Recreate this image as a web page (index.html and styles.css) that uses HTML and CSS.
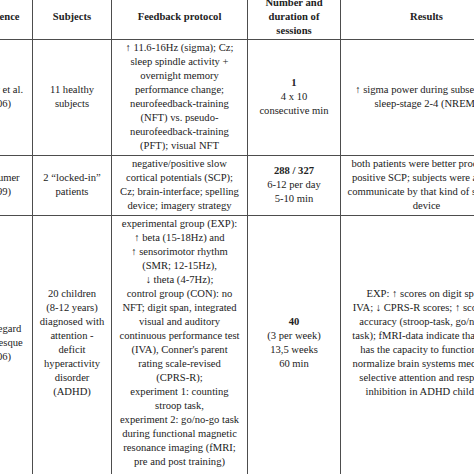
FILE: index.html
```html
<!DOCTYPE html>
<html>
<head>
<meta charset="utf-8">
<link rel="stylesheet" href="styles.css">
</head>
<body>
<div class="frame">
<table class="tbl">
<colgroup>
<col class="c-ref"><col class="c-sub"><col class="c-fb"><col class="c-num"><col class="c-res">
</colgroup>
<thead>
<tr>
<th>Reference</th>
<th>Subjects</th>
<th>Feedback protocol</th>
<th>Number and<br>duration of<br>sessions</th>
<th>Results</th>
</tr>
</thead>
<tbody>
<tr class="r1">
<td>Berner et al.<br>(2006)</td>
<td>11 healthy<br>subjects</td>
<td>↑ 11.6-16Hz (sigma); Cz;<br>sleep spindle activity +<br>overnight memory<br>performance change;<br>neurofeedback-training<br>(NFT) vs. pseudo-<br>neurofeedback-training<br>(PFT); visual NFT</td>
<td><b>1</b><br>4 x 10<br>consecutive min</td>
<td>↑ sigma power during subsequent<br>sleep-stage 2-4 (NREM)</td>
</tr>
<tr class="r2">
<td>Birbaumer<br>(1999)</td>
<td>2 “locked-in”<br>patients</td>
<td>negative/positive slow<br>cortical potentials (SCP);<br>Cz; brain-interface; spelling<br>device; imagery strategy</td>
<td><b>288 / 327</b><br>6-12 per day<br>5-10 min</td>
<td>both patients were better producing<br>positive SCP; subjects were able to<br>communicate by that kind of spelling<br>device</td>
</tr>
<tr class="r3">
<td>Beauregard<br>&amp; Lévesque<br>(2006)</td>
<td>20 children<br>(8-12 years)<br>diagnosed with<br>attention -<br>deficit<br>hyperactivity<br>disorder<br>(ADHD)</td>
<td>experimental group (EXP):<br>↑ beta (15-18Hz) and<br>↑ sensorimotor rhythm<br>(SMR; 12-15Hz),<br>↓ theta (4-7Hz);<br>control group (CON): no<br>NFT; digit span, integrated<br>visual and auditory<br>continuous performance test<br>(IVA), Conner's parent<br>rating scale-revised<br>(CPRS-R);<br>experiment 1: counting<br>stroop task,<br>experiment 2: go/no-go task<br>during functional magnetic<br>resonance imaging (fMRI;<br>pre and post training)</td>
<td><b>40</b><br>(3 per week)<br>13,5 weeks<br>60 min</td>
<td>EXP: ↑ scores on digit span,<br>IVA; ↓ CPRS-R scores; ↑ scores in<br>accuracy (stroop-task, go/no-go<br>task); fMRI-data indicate that NFT<br>has the capacity to functionally<br>normalize brain systems mediating<br>selective attention and response<br>inhibition in ADHD children</td>
</tr>
</tbody>
</table>
</div>
</body>
</html>
```

FILE: styles.css
```css
html, body {
  margin: 0;
  padding: 0;
  background: #ffffff;
}
body {
  width: 474px;
  height: 474px;
  overflow: hidden;
}
.frame {
  margin-left: -39px;
  margin-top: -5px;
}
.tbl {
  border-collapse: collapse;
  table-layout: fixed;
  width: 551px;
  font-family: "Liberation Serif", "Times New Roman", serif;
  font-size: 10.6px;
  line-height: 14px;
  color: #222222;
}
.c-ref { width: 71px; }
.c-sub { width: 79px; }
.c-fb { width: 136px; }
.c-num { width: 93px; }
.c-res { width: 172px; }
.tbl th,
.tbl td {
  border: 1px solid #4d4d4d;
  padding: 1px 1px 2px;
  text-align: center;
  vertical-align: middle;
  white-space: nowrap;
}
.tbl th {
  font-weight: bold;
  border-top: none;
  padding: 1px;
}
.tbl .r3 td {
  padding-bottom: 6px;
}
.tbl b {
  font-weight: bold;
}
```
